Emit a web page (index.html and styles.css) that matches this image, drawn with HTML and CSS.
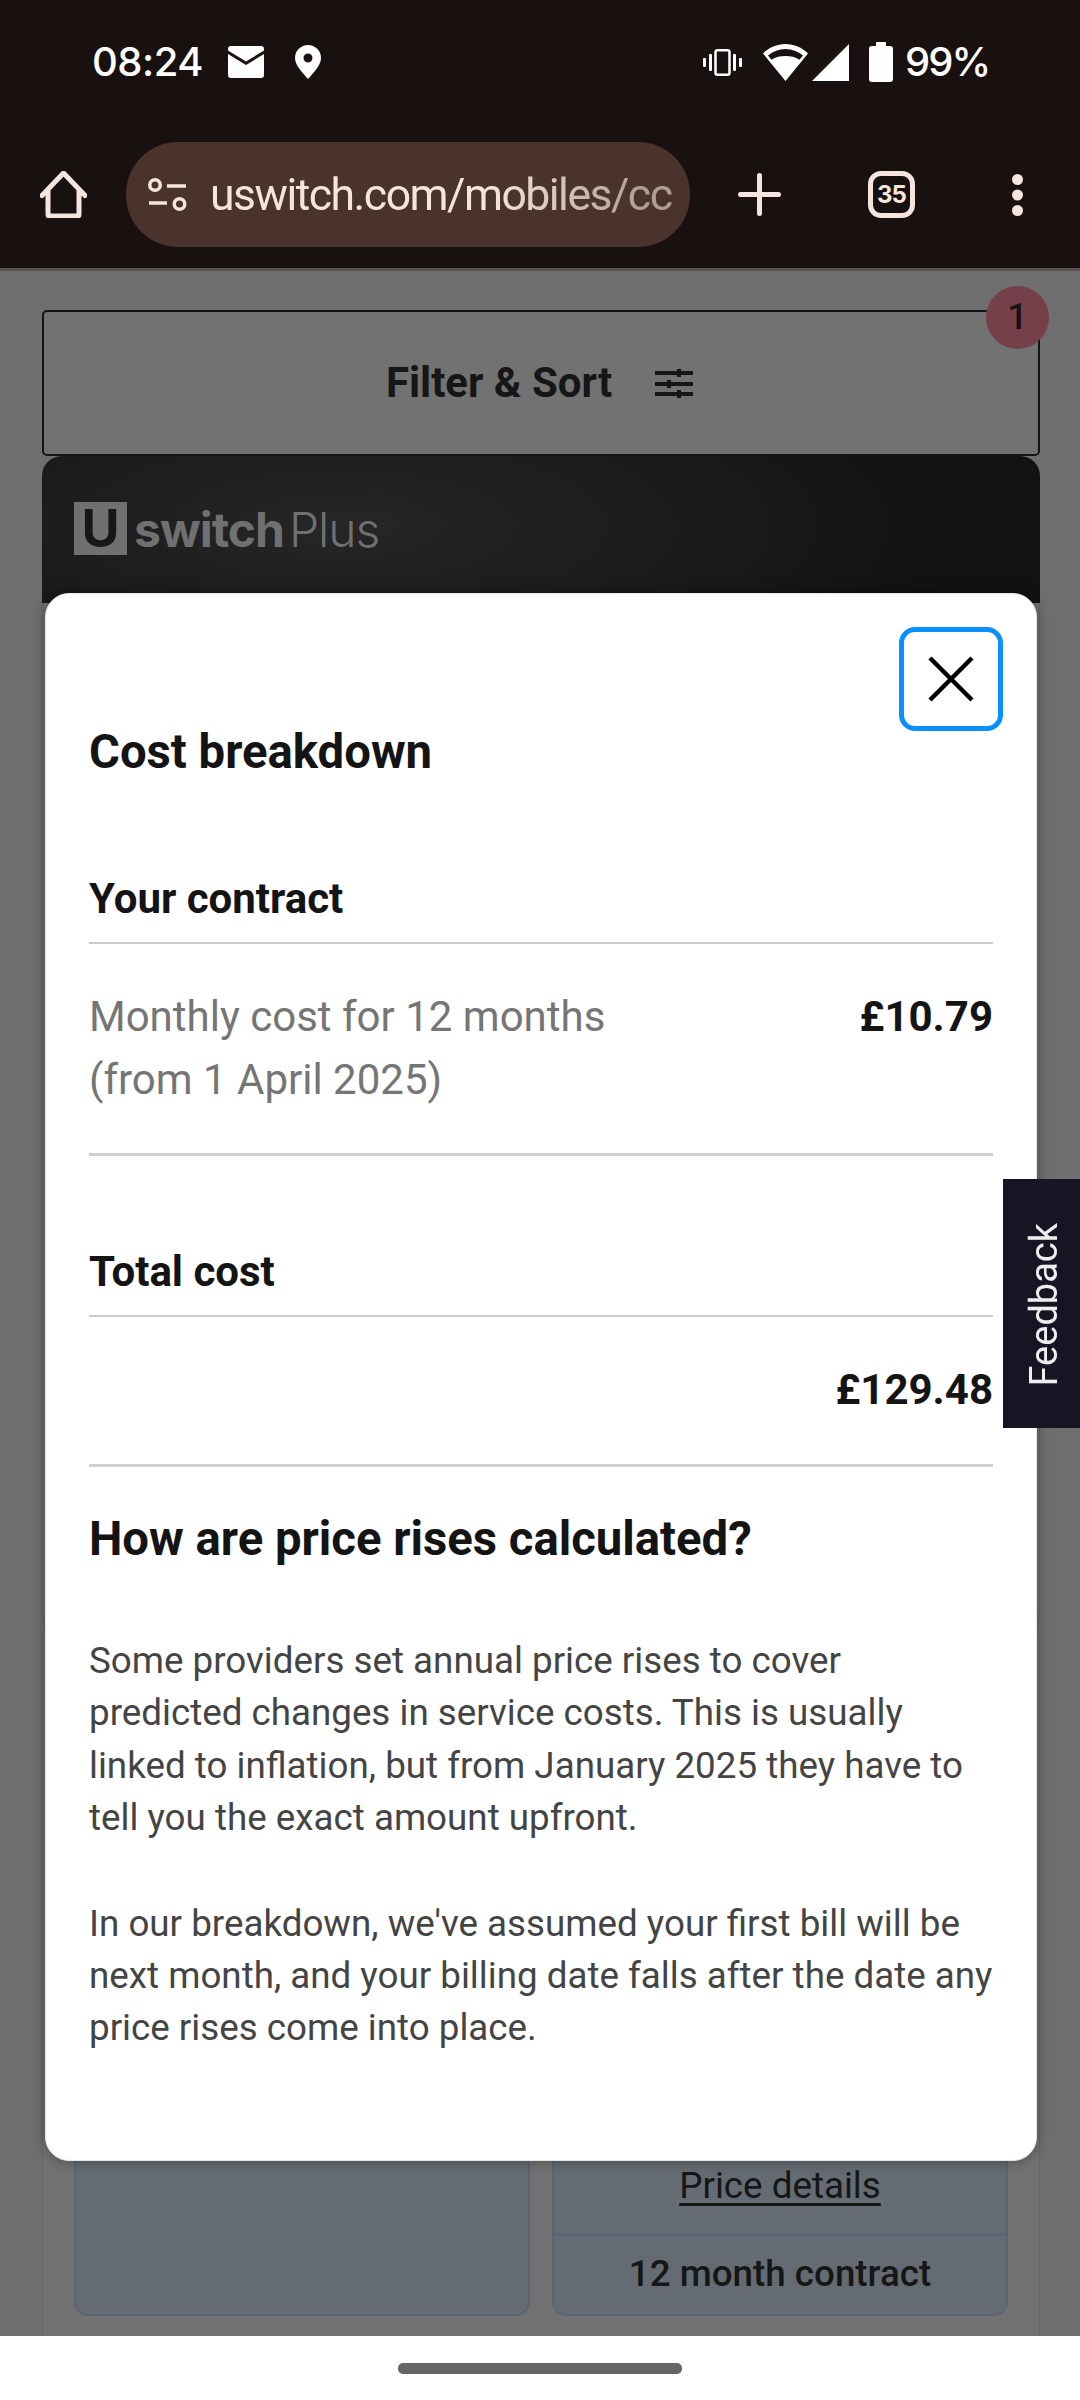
FILE: index.html
```html
<!DOCTYPE html>
<html lang="en">
<head>
<meta charset="utf-8">
<title>Cost breakdown</title>
<link rel="stylesheet" href="styles.css">
</head>
<body>
<div class="screen">
  <header class="chrome">
    <div class="status">
      <div class="status-left">
        <span class="clock">08:24</span>
        <svg class="ico-mail" viewBox="0 0 36 32"><path d="M3 0h30a3 3 0 0 1 3 3v1.500L18 15.500 0 4.500V3a3 3 0 0 1 3-3z M0 8l18 11L36 8v21a3 3 0 0 1-3 3H3a3 3 0 0 1-3-3z" fill="#fff"/></svg>
        <svg class="ico-pin" viewBox="0 0 26 34"><path fill-rule="evenodd" d="M13 0a13 13 0 0 1 13 13c0 7-7 14-13 21C7 27 0 20 0 13A13 13 0 0 1 13 0zm0 8.500a4.500 4.500 0 1 0 0 9 4.500 4.500 0 0 0 0-9z" fill="#fff"/></svg>
      </div>
      <div class="status-right">
        <svg class="ico-vib" viewBox="0 0 39 27"><g fill="none" stroke="#fff" stroke-width="2.500"><rect x="12.500" y="1.250" width="14" height="24.500" rx="2"/></g><g fill="#fff"><rect x="6" y="5" width="3" height="17" rx="1"/><rect x="30" y="5" width="3" height="17" rx="1"/><rect x="0" y="9" width="3" height="9" rx="1"/><rect x="36" y="9" width="3" height="9" rx="1"/></g></svg>
        <svg class="ico-wifi" viewBox="0 0 45 37"><path fill-rule="evenodd" d="M22.500 0C31 0 39 3.500 45 9.500L22.500 37 0 9.500C6 3.500 14 0 22.500 0zm0 5C16 5 10 7.200 5 11.500l3.500 4.300C12.500 13 17.500 12 22.500 12s10 1 14 3.800l3.500-4.300C35 7.200 29 5 22.500 5z" fill="#fff"/></svg>
        <svg class="ico-signal" viewBox="0 0 37 37"><path d="M37 0v37H0z" fill="#fff"/></svg>
        <svg class="ico-batt" viewBox="0 0 24 40"><path d="M8 0h8a1 1 0 0 1 1 1v3h4a3 3 0 0 1 3 3v30a3 3 0 0 1-3 3H3a3 3 0 0 1-3-3V7a3 3 0 0 1 3-3h4V1a1 1 0 0 1 1-1z" fill="#fff"/></svg>
        <span class="pct">99%</span>
      </div>
    </div>
    <div class="toolbar">
      <svg class="ico-home" viewBox="0 0 47 47"><path d="M2 24.500 23.500 2 45 24.500M8 19v24.500a1.500 1.500 0 0 0 1.500 1.500h28a1.500 1.500 0 0 0 1.500-1.500V19" fill="none" stroke="#f5e5de" stroke-width="5" stroke-linecap="round" stroke-linejoin="round"/></svg>
      <div class="url">
        <svg class="ico-tune" viewBox="0 0 39 33"><g fill="none" stroke="#f5e5de" stroke-width="3.500"><circle cx="7" cy="7" r="5.250"/><circle cx="31.500" cy="26" r="5.250"/><path d="M19 8h19M1 25h18"/></g></svg>
        <span class="url-text">uswitch.com/mobiles/cc</span>
      </div>
      <svg class="ico-plus" viewBox="0 0 43 43"><path d="M21.500 2.500v38M2.500 21.500h38" stroke="#f5e5de" stroke-width="5" stroke-linecap="round"/></svg>
      <div class="tabs">35</div>
      <svg class="ico-dots" viewBox="0 0 11 42"><g fill="#f5e5de"><circle cx="5.500" cy="5.500" r="5.500"/><circle cx="5.500" cy="21" r="5.500"/><circle cx="5.500" cy="36.500" r="5.500"/></g></svg>
    </div>
  </header>

  <main class="page">
    <div class="filter">
      <span class="filter-label">Filter &amp; Sort</span>
      <svg class="ico-sliders" viewBox="0 0 38 29"><g fill="#161616"><rect y="2" width="38" height="4"/><rect y="13" width="38" height="4"/><rect y="23" width="38" height="4"/><rect x="22" y="0" width="4" height="8"/><rect x="12" y="11" width="4" height="8"/><rect x="22" y="21" width="4" height="8"/></g></svg>
      <span class="badge">1</span>
    </div>
    <section class="plan">
      <div class="plan-head">
        <span class="logo-u">U</span>
        <span class="logo-switch">switch</span>
        <span class="logo-plus">Plus</span>
      </div>
    </section>
    <section class="lower">
      <div class="panel"></div>
      <div class="panel">
        <div class="panel-top"><span class="price-link">Price details</span></div>
        <div class="panel-bottom">12 month contract</div>
      </div>
    </section>

    <aside class="modal">
      <div class="close-wrap">
        <button class="close" aria-label="Close"><svg viewBox="0 0 46 46"><path d="M2 2l42 42M44 2 2 44" stroke="#000" stroke-width="4.500"/></svg></button>
      </div>
      <h2 class="title">Cost breakdown</h2>
      <h3 class="subhead first">Your contract</h3>
      <div class="row">
        <div class="row-label">Monthly cost for 12 months<br>(from 1 April 2025)</div>
        <div class="amount">£10.79</div>
      </div>
      <h3 class="subhead second">Total cost</h3>
      <div class="row total">
        <div class="amount">£129.48</div>
      </div>
      <h2 class="title question">How are price rises calculated?</h2>
      <p class="body-text">Some providers set annual price rises to cover predicted changes in service costs. This is usually linked to inflation, but from January 2025 they have to tell you the exact amount upfront.</p>
      <p class="body-text second-para">In our breakdown, we've assumed your first bill will be next month, and your billing date falls after the date any price rises come into place.</p>
    </aside>
    <div class="feedback"><span class="feedback-label">Feedback</span></div>
  </main>

  <footer class="navbar"><span class="pill"></span></footer>
</div>
</body>
</html>
```
FILE: styles.css
```css
* { box-sizing: border-box; }
html, body { margin: 0; padding: 0; }
body { font-family: Roboto, "Liberation Sans", sans-serif; background: #fff; }
.screen { width: 1080px; height: 2400px; display: flex; flex-direction: column; overflow: hidden; }

.chrome { background: #191110; height: 271px; border-bottom: 3px solid #5c524f; flex: none; }
.status { height: 142px; display: flex; justify-content: space-between; align-items: flex-start; padding: 42px 93px 0 92px; }
.status-left, .status-right { display: flex; align-items: center; height: 40px; }
.clock { font: 500 40px/40px Inter, sans-serif; letter-spacing: -.5px; color: #fff; width: 111px; white-space: nowrap; }
.ico-mail { width: 36px; height: 32px; margin-left: 25px; }
.ico-pin { width: 26px; height: 34px; margin-left: 31px; }
.ico-vib { width: 39px; height: 27px; }
.ico-wifi { width: 45px; height: 37px; margin-left: 21px; }
.ico-signal { width: 37px; height: 37px; margin-left: 4px; }
.ico-batt { width: 24px; height: 40px; margin-left: 20px; }
.pct { font: 500 40px/40px Inter, sans-serif; letter-spacing: -2px; color: #fff; margin-left: 12px; width: 82px; white-space: nowrap; }

.toolbar { display: flex; align-items: center; height: 105px; padding-left: 40px; }
.ico-home { width: 47px; height: 47px; flex: none; }
.url { width: 564px; height: 105px; margin-left: 39px; border-radius: 52px; background: #4a332c; display: flex; align-items: center; padding: 0 10px 0 22px; flex: none; }
.ico-tune { width: 39px; height: 33px; flex: none; }
.url-text { margin-left: 23px; font-size: 44.5px; line-height: 60px; letter-spacing: -1.5px; color: #f5e5de; white-space: nowrap; flex: 1; -webkit-mask-image: linear-gradient(90deg, #000 60%, rgba(0,0,0,.6) 92%); mask-image: linear-gradient(90deg, #000 60%, rgba(0,0,0,.6) 92%); }
.ico-plus { width: 43px; height: 43px; margin-left: 48px; flex: none; }
.tabs { width: 47px; height: 47px; margin-left: 87px; border: 5px solid #f5e5de; border-radius: 13px; color: #f5e5de; font: 700 24px/37px Inter, sans-serif; text-align: center; letter-spacing: -1px; flex: none; }
.ico-dots { width: 11px; height: 42px; margin-left: 97px; flex: none; }

.page { position: relative; flex: 1; background: #6f6f6f; padding: 39px 40px 0 42px; display: flex; flex-direction: column; overflow: hidden; }

.filter { position: relative; height: 146px; padding-right: 3px; border: 2px solid #141414; border-radius: 5px; background: #727272; display: flex; align-items: center; justify-content: center; gap: 43px; color: #161616; flex: none; }
.filter-label { font-size: 42px; font-weight: 700; line-height: 48px; }
.ico-sliders { width: 38px; height: 29px; }
.badge { position: absolute; top: -26px; right: -11px; width: 63px; height: 63px; border-radius: 50%; background: #754049; font-size: 36px; font-weight: 500; line-height: 63px; text-align: center; color: #141414; }

.plan { height: 1178px; border-radius: 20px; background: #727272; border-left: 1px solid #666; border-right: 1px solid #666; flex: none; }
.plan-head { height: 147px; margin: 0 -1px; border-radius: 20px 20px 0 0; background: radial-gradient(620px 200px at 300px 70px, #262626, #121212); display: flex; align-items: baseline; padding: 44px 0 0 32px; color: #707070; font-family: Inter, sans-serif; }
.logo-u { width: 53px; height: 53px; background: #707070; color: #171717; font-size: 52px; font-weight: 700; line-height: 53px; text-align: center; }
.logo-switch { margin-left: 7px; font-size: 48px; font-weight: 700; letter-spacing: -1px; }
.logo-plus { margin-left: 5px; font-size: 48px; font-weight: 300; letter-spacing: -1px; }

.lower { flex: 1; border-left: 1px solid #666; border-right: 1px solid #666; padding: 0 31px 20px 31px; display: flex; gap: 22px; background: #727272; }
.panel { flex: 1; display: flex; flex-direction: column; background: #646b72; border: 2px solid #596573; border-top: 0; border-radius: 0 0 14px 14px; color: #161616; }
.panel-top { flex: 1; display: flex; flex-direction: column; justify-content: flex-end; align-items: center; padding-bottom: 26px; border-bottom: 3px solid #596573; }
.price-link { font-size: 36.75px; line-height: 42px; text-decoration: underline; text-underline-offset: 5px; }
.panel-bottom { flex: none; height: 78px; padding-bottom: 3px; display: flex; align-items: center; justify-content: center; font-size: 36.75px; font-weight: 500; }

.modal { position: absolute; left: 45px; top: 322px; width: 992px; height: 1568px; background: #fff; border: 1px solid #e6e6e6; border-radius: 24px; box-shadow: 0 0 14px rgba(0,0,0,.35); padding: 33px 43px 0 43px; color: #141414; }
.close-wrap { display: flex; justify-content: flex-end; margin-right: -10px; height: 97px; }
.close { width: 104px; height: 104px; border: 5px solid #0a8fff; border-radius: 16px; background: #fff; padding: 0; display: flex; align-items: center; justify-content: center; flex: none; }
.close svg { width: 46px; height: 46px; display: block; }
.title { margin: 0; font-size: 47.25px; line-height: 56px; font-weight: 700; }
.title.question { margin-top: 43px; line-height: 59px; }
.subhead { margin: 0; font-size: 42px; line-height: 53px; height: 72px; font-weight: 700; border-bottom: 2px solid #ccc; }
.subhead.first { margin-top: 92px; }
.subhead.second { margin-top: 89px; }
.row { display: flex; justify-content: space-between; padding: 41px 0 42px; border-bottom: 3px solid #d0d0d0; }
.row.total { justify-content: flex-end; padding: 41px 0 43px; }
.row-label { font-size: 42px; line-height: 63px; color: #757575; }
.amount { font-size: 42px; line-height: 63px; font-weight: 700; }
.body-text { margin: 66px -6px 0 0; font-size: 36.75px; line-height: 52.4px; color: #444; }
.body-text.second-para { margin-top: 53px; }

.feedback { position: absolute; right: 0; top: 908px; width: 77px; height: 249px; padding: 3px 0 0 5px; background: #151524; display: flex; align-items: center; justify-content: center; }
.feedback-label { writing-mode: vertical-rl; transform: rotate(180deg); color: #eee; font-size: 38px; line-height: 40px; }

.navbar { flex: none; height: 64px; background: #fff; display: flex; justify-content: center; padding-top: 27px; }
.pill { width: 284px; height: 11px; border-radius: 5px; background: #666; }
```
